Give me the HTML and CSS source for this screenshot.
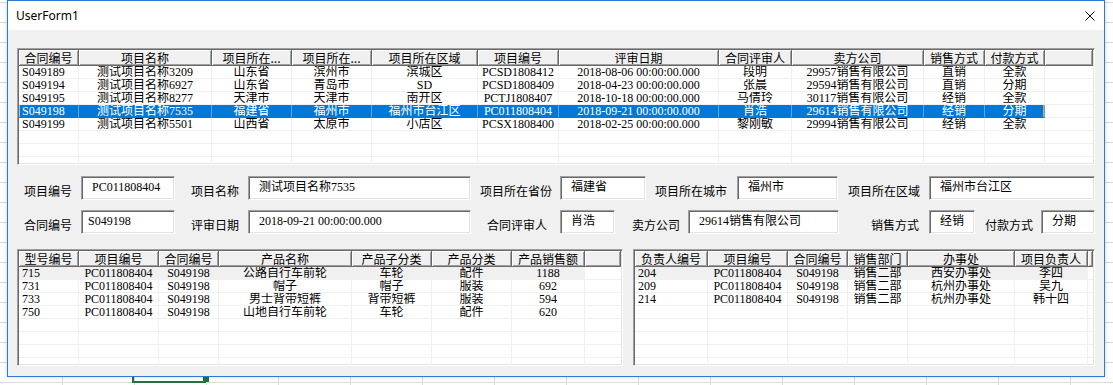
FILE: index.html
```html
<!DOCTYPE html>
<html lang="zh-CN">
<head>
<meta charset="utf-8">
<title>UserForm1</title>
<link rel="stylesheet" href="styles.css">
</head>
<body>
<div class="xl-sel"><div class="xl-handle"></div></div>
<div class="window">
  <div class="titlebar">
    <span class="title">UserForm1</span>
    <svg class="close" width="10" height="10" viewBox="0 0 10 10"><path d="M0.5 0.5 L9.5 9.5 M9.5 0.5 L0.5 9.5" stroke="#000" stroke-width="1" fill="none"/></svg>
  </div>
  <div class="body">
    <div class="lv lv-top">
      <div class="grid head">
        <div class="hc">合同编号</div><div class="hc">项目名称</div><div class="hc">项目所在...</div><div class="hc">项目所在...</div><div class="hc">项目所在区域</div><div class="hc">项目编号</div><div class="hc">评审日期</div><div class="hc">合同评审人</div><div class="hc">卖方公司</div><div class="hc">销售方式</div><div class="hc">付款方式</div><div class="hc"></div>
      </div>
      <div class="grid row"><div class="c l">S049189</div><div class="c">测试项目名称3209</div><div class="c">山东省</div><div class="c">滨州市</div><div class="c">滨城区</div><div class="c">PCSD1808412</div><div class="c">2018-08-06 00:00:00.000</div><div class="c">段明</div><div class="c">29957销售有限公司</div><div class="c">直销</div><div class="c">全款</div><div class="c fill"></div></div>
      <div class="grid row"><div class="c l">S049194</div><div class="c">测试项目名称6927</div><div class="c">山东省</div><div class="c">青岛市</div><div class="c">SD</div><div class="c">PCSD1808409</div><div class="c">2018-04-23 00:00:00.000</div><div class="c">张晨</div><div class="c">29594销售有限公司</div><div class="c">直销</div><div class="c">分期</div><div class="c fill"></div></div>
      <div class="grid row"><div class="c l">S049195</div><div class="c">测试项目名称8277</div><div class="c">天津市</div><div class="c">天津市</div><div class="c">南开区</div><div class="c">PCTJ1808407</div><div class="c">2018-10-18 00:00:00.000</div><div class="c">马倩玲</div><div class="c">30117销售有限公司</div><div class="c">经销</div><div class="c">全款</div><div class="c fill"></div></div>
      <div class="grid row sel"><div class="c l focus-l">S049198</div><div class="c">测试项目名称7535</div><div class="c">福建省</div><div class="c">福州市</div><div class="c">福州市台江区</div><div class="c">PC011808404</div><div class="c">2018-09-21 00:00:00.000</div><div class="c">肖浩</div><div class="c">29614销售有限公司</div><div class="c">经销</div><div class="c focus-r">分期</div><div class="c fill"></div></div>
      <div class="grid row"><div class="c l">S049199</div><div class="c">测试项目名称5501</div><div class="c">山西省</div><div class="c">太原市</div><div class="c">小店区</div><div class="c">PCSX1808400</div><div class="c">2018-02-25 00:00:00.000</div><div class="c">黎刚敏</div><div class="c">29994销售有限公司</div><div class="c">经销</div><div class="c">全款</div><div class="c fill"></div></div>
      <div class="grid row"><div class="c"></div><div class="c"></div><div class="c"></div><div class="c"></div><div class="c"></div><div class="c"></div><div class="c"></div><div class="c"></div><div class="c"></div><div class="c"></div><div class="c"></div><div class="c fill"></div></div>
      <div class="grid row"><div class="c"></div><div class="c"></div><div class="c"></div><div class="c"></div><div class="c"></div><div class="c"></div><div class="c"></div><div class="c"></div><div class="c"></div><div class="c"></div><div class="c"></div><div class="c fill"></div></div>
      <div class="grid row"><div class="c"></div><div class="c"></div><div class="c"></div><div class="c"></div><div class="c"></div><div class="c"></div><div class="c"></div><div class="c"></div><div class="c"></div><div class="c"></div><div class="c"></div><div class="c fill"></div></div>
    </div>

    <div class="frow frow-1">
      <span class="lbl ml7">项目编号</span><div class="tb ml9 w94">PC011808404</div>
      <span class="lbl ml16">项目名称</span><div class="tb ml9 w223">测试项目名称7535</div>
      <span class="lbl ml9">项目所在省份</span><div class="tb ml8 w86">福建省</div>
      <span class="lbl ml9">项目所在城市</span><div class="tb ml10 w101">福州市</div>
      <span class="lbl ml10">项目所在区域</span><div class="tb ml9 w166">福州市台江区</div>
    </div>
    <div class="frow frow-2">
      <span class="lbl ml7">合同编号</span><div class="tb tb-n ml9 w94">S049198</div>
      <span class="lbl ml16">评审日期</span><div class="tb ml9 w223">2018-09-21 00:00:00.000</div>
      <span class="lbl ml16">合同评审人</span><div class="tb ml13 w55">肖浩</div>
      <span class="lbl ml17">卖方公司</span><div class="tb ml8 w151">29614销售有限公司</div>
      <span class="lbl ml32">销售方式</span><div class="tb ml10 w46">经销</div>
      <span class="lbl ml10">付款方式</span><div class="tb ml8 w54">分期</div>
    </div>

    <div class="bottom">
      <div class="lv lv-bl">
        <div class="grid head">
          <div class="hc">型号编号</div><div class="hc">项目编号</div><div class="hc">合同编号</div><div class="hc">产品名称</div><div class="hc">产品子分类</div><div class="hc">产品分类</div><div class="hc">产品销售额</div><div class="hc"></div>
        </div>
        <div class="grid row gsel"><div class="c l">715</div><div class="c">PC011808404</div><div class="c">S049198</div><div class="c">公路自行车前轮</div><div class="c">车轮</div><div class="c">配件</div><div class="c">1188</div><div class="c fill"></div></div>
        <div class="grid row"><div class="c l">731</div><div class="c">PC011808404</div><div class="c">S049198</div><div class="c">帽子</div><div class="c">帽子</div><div class="c">服装</div><div class="c">692</div><div class="c fill"></div></div>
        <div class="grid row"><div class="c l">733</div><div class="c">PC011808404</div><div class="c">S049198</div><div class="c">男士背带短裤</div><div class="c">背带短裤</div><div class="c">服装</div><div class="c">594</div><div class="c fill"></div></div>
        <div class="grid row"><div class="c l">750</div><div class="c">PC011808404</div><div class="c">S049198</div><div class="c">山地自行车前轮</div><div class="c">车轮</div><div class="c">配件</div><div class="c">620</div><div class="c fill"></div></div>
        <div class="grid row"><div class="c"></div><div class="c"></div><div class="c"></div><div class="c"></div><div class="c"></div><div class="c"></div><div class="c"></div><div class="c fill"></div></div>
        <div class="grid row"><div class="c"></div><div class="c"></div><div class="c"></div><div class="c"></div><div class="c"></div><div class="c"></div><div class="c"></div><div class="c fill"></div></div>
        <div class="grid row"><div class="c"></div><div class="c"></div><div class="c"></div><div class="c"></div><div class="c"></div><div class="c"></div><div class="c"></div><div class="c fill"></div></div>
        <div class="grid row"><div class="c"></div><div class="c"></div><div class="c"></div><div class="c"></div><div class="c"></div><div class="c"></div><div class="c"></div><div class="c fill"></div></div>
      </div>
      <div class="lv lv-br">
        <div class="grid head">
          <div class="hc">负责人编号</div><div class="hc">项目编号</div><div class="hc">合同编号</div><div class="hc">销售部门</div><div class="hc">办事处</div><div class="hc">项目负责人</div><div class="hc"></div>
        </div>
        <div class="grid row gsel"><div class="c l">204</div><div class="c">PC011808404</div><div class="c">S049198</div><div class="c">销售二部</div><div class="c">西安办事处</div><div class="c">李四</div><div class="c fill"></div></div>
        <div class="grid row"><div class="c l">209</div><div class="c">PC011808404</div><div class="c">S049198</div><div class="c">销售二部</div><div class="c">杭州办事处</div><div class="c">吴九</div><div class="c fill"></div></div>
        <div class="grid row"><div class="c l">214</div><div class="c">PC011808404</div><div class="c">S049198</div><div class="c">销售二部</div><div class="c">杭州办事处</div><div class="c">韩十四</div><div class="c fill"></div></div>
        <div class="grid row"><div class="c"></div><div class="c"></div><div class="c"></div><div class="c"></div><div class="c"></div><div class="c"></div><div class="c fill"></div></div>
        <div class="grid row"><div class="c"></div><div class="c"></div><div class="c"></div><div class="c"></div><div class="c"></div><div class="c"></div><div class="c fill"></div></div>
        <div class="grid row"><div class="c"></div><div class="c"></div><div class="c"></div><div class="c"></div><div class="c"></div><div class="c"></div><div class="c fill"></div></div>
        <div class="grid row"><div class="c"></div><div class="c"></div><div class="c"></div><div class="c"></div><div class="c"></div><div class="c"></div><div class="c fill"></div></div>
        <div class="grid row"><div class="c"></div><div class="c"></div><div class="c"></div><div class="c"></div><div class="c"></div><div class="c"></div><div class="c fill"></div></div>
      </div>
    </div>
  </div>
</div>
</body>
</html>
```

FILE: styles.css
```css
* { box-sizing: border-box; }
html, body { margin: 0; padding: 0; }
body {
  width: 1113px;
  height: 385px;
  overflow: hidden;
  position: relative;
  background-color: #fff;
  background-image:
    linear-gradient(to right, #dadada 1px, transparent 1px),
    linear-gradient(to bottom, #dadada 1px, transparent 1px);
  background-size: 72px 100%, 100% 20px;
  background-position: 62px 0, 0 2px;
  font-family: "Noto Sans CJK SC", sans-serif;
  color: #000;
}

/* excel selection behind the form */
.xl-sel {
  position: absolute;
  left: 132px;
  top: 355px;
  width: 74px;
  height: 28px;
  border: 2px solid #217346;
  border-right: none;
  z-index: 0;
}
.xl-handle {
  position: absolute;
  right: -3px;
  bottom: -1px;
  width: 6px;
  height: 6px;
  background: #217346;
}

.window {
  position: relative;
  z-index: 1;
  margin-left: 7px;
  width: 1098px;
  height: 377px;
  border: 1px solid #2b7bd6;
  background: #f0f0f0;
  box-shadow: 0 0 4px rgba(0, 0, 0, 0.18);
}
.titlebar {
  height: 29px;
  background: #fff;
  display: flex;
  align-items: center;
  justify-content: space-between;
  padding: 0 9px 0 8px;
}
.title {
  font-family: "Noto Sans", sans-serif;
  font-size: 12px;
  line-height: 16px;
}
.close { display: block; }

.body { padding: 18px 9px 0 9px; }

/* list views */
.lv {
  height: 117px;
  background: #fff;
  border-style: solid;
  border-width: 1px;
  border-color: #a0a0a0 #fff #fff #a0a0a0;
  box-shadow: inset 1px 1px 0 #696969, inset -1px -1px 0 #e3e3e3;
  padding: 1px;
  overflow: hidden;
}
.grid { display: grid; }
.lv-top .grid { grid-template-columns: 60px 133px 80px 80px 106px 81px 160px 73px 132px 61px 60px 1fr; }
.lv-bl .grid { grid-template-columns: 60px 80px 60px 133px 80px 80px 73px 1fr; }
.lv-br .grid { grid-template-columns: 73px 80px 60px 60px 107px 73px 1fr; }

.head { height: 16px; }
.hc {
  background: #f0f0f0;
  border-right: 1px solid #696969;
  border-bottom: 1px solid #696969;
  box-shadow: inset 1px 1px 0 #fff, inset -1px -1px 0 #a0a0a0;
  font-size: 12px;
  line-height: 15px;
  text-align: center;
  white-space: nowrap;
  overflow: hidden;
}

.row { height: 13px; }
.c {
  height: 13px;
  border-right: 1px solid #f0f0f0;
  border-bottom: 1px solid #f0f0f0;
  font-family: "Liberation Serif", "Noto Sans CJK SC", serif;
  font-size: 12px;
  line-height: 12px;
  text-align: center;
  white-space: nowrap;
  overflow: hidden;
}
.c.l { text-align: left; padding-left: 3px; }
.c.fill { border-right: none; }

.row.sel .c:not(.fill) {
  background: #0078d7;
  color: #fff;
  border-right-color: #5fa5e4;
  border-bottom-color: #0078d7;
}
.row.sel .focus-l { box-shadow: inset 1px 0 0 #9cc9f0; }
.row.sel .focus-r { box-shadow: inset -1px 0 0 #f0a040; }
.row.gsel .c:not(.fill) { background: #f0f0f0; }

/* form rows */
.frow {
  display: flex;
  align-items: flex-start;
  height: 24px;
}
.frow-1 { margin-top: 11px; }
.frow-2 { margin-top: 10px; }
.lbl {
  flex: none;
  font-size: 12px;
  line-height: 16px;
  padding-top: 7px;
  white-space: nowrap;
}
.tb {
  flex: none;
  height: 24px;
  background: #fff;
  border-style: solid;
  border-width: 1px;
  border-color: #a0a0a0 #fff #fff #a0a0a0;
  box-shadow: inset 1px 1px 0 #696969, inset -1px -1px 0 #e3e3e3;
  padding: 3px 0 0 10px;
  font-family: "Liberation Serif", "Noto Sans CJK SC", serif;
  font-size: 12px;
  line-height: 14px;
  white-space: nowrap;
  overflow: hidden;
}
.tb-n { padding-left: 6px; }

.ml7 { margin-left: 7px; }
.ml8 { margin-left: 8px; }
.ml9 { margin-left: 9px; }
.ml10 { margin-left: 10px; }
.ml13 { margin-left: 13px; }
.ml16 { margin-left: 16px; }
.ml17 { margin-left: 17px; }
.ml32 { margin-left: 32px; }

.w46 { width: 46px; }
.w54 { width: 54px; }
.w55 { width: 55px; }
.w86 { width: 86px; }
.w94 { width: 94px; }
.w101 { width: 101px; }
.w151 { width: 151px; }
.w166 { width: 166px; }
.w223 { width: 223px; }

.bottom {
  display: flex;
  gap: 10px;
  margin-top: 15px;
}
.lv-bl { width: 606px; }
.lv-br { width: 462px; }
```
